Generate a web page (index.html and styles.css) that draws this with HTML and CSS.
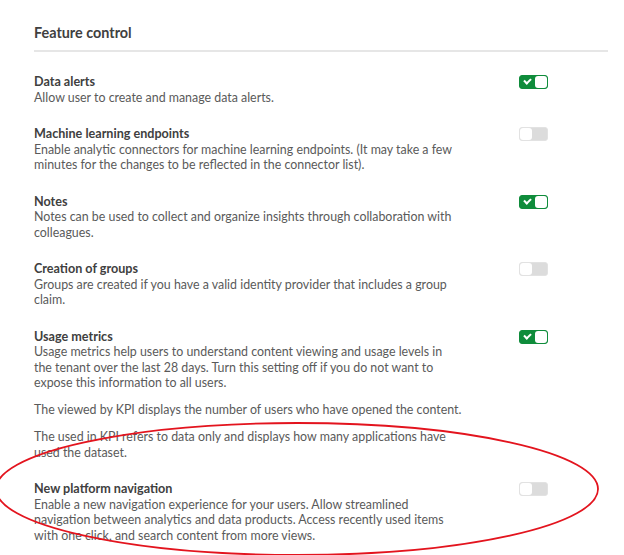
FILE: index.html
```html
<!DOCTYPE html>
<html lang="en">
<head>
    <meta charset="UTF-8">
    <meta name="viewport" content="width=device-width, initial-scale=1.0">
    <title>Feature control</title>
    <link rel="stylesheet" href="styles.css">
</head>
<body>
    <div class="panel">
        <h2 class="panel-title">Feature control</h2>

        <div class="feature-list">
            <div class="feature">
                <div class="feature-text">
                    <div class="feature-name">Data alerts</div>
                    <p>Allow user to create and manage data alerts.</p>
                </div>
                <span class="toggle on"></span>
            </div>

            <div class="feature">
                <div class="feature-text">
                    <div class="feature-name">Machine learning endpoints</div>
                    <p>Enable analytic connectors for machine learning endpoints. (It may take a few minutes for the changes to be reflected in the connector list).</p>
                </div>
                <span class="toggle"></span>
            </div>

            <div class="feature">
                <div class="feature-text">
                    <div class="feature-name">Notes</div>
                    <p>Notes can be used to collect and organize insights through collaboration with colleagues.</p>
                </div>
                <span class="toggle on"></span>
            </div>

            <div class="feature">
                <div class="feature-text">
                    <div class="feature-name">Creation of groups</div>
                    <p>Groups are created if you have a valid identity provider that includes a group claim.</p>
                </div>
                <span class="toggle"></span>
            </div>

            <div class="feature">
                <div class="feature-text">
                    <div class="feature-name">Usage metrics</div>
                    <p>Usage metrics help users to understand content viewing and usage levels in the tenant over the last 28 days. Turn this setting off if you do not want to expose this information to all users.</p>
                    <p>The viewed by KPI displays the number of users who have opened the content.</p>
                    <p>The used in KPI refers to data only and displays how many applications have used the dataset.</p>
                </div>
                <span class="toggle on"></span>
            </div>

            <div class="feature">
                <div class="feature-text">
                    <div class="feature-name">New platform navigation</div>
                    <p>Enable a new navigation experience for your users. Allow streamlined navigation between analytics and data products. Access recently used items with one click, and search content from more views.</p>
                </div>
                <span class="toggle"></span>
            </div>
        </div>
    </div>

    <svg class="annotation" width="624" height="555" viewBox="0 0 624 555">
        <ellipse cx="297" cy="489" rx="301" ry="66" fill="none" stroke="#e3141e" stroke-width="1.8"/>
    </svg>
</body>
</html>
```

FILE: styles.css
```css
* {
    margin: 0;
    padding: 0;
    box-sizing: border-box;
}

body {
    font-family: Lato, "Liberation Sans", sans-serif;
    background: #fff;
    color: #404040;
    width: 624px;
    height: 555px;
    overflow: hidden;
    position: relative;
}

.panel {
    padding: 23px 16px 0 34px;
}

.panel-title {
    font-size: 14.4px;
    font-weight: bold;
    line-height: 20px;
    color: #404040;
    padding-bottom: 7px;
    border-bottom: 2px solid #e6e6e6;
}

.feature-list {
    padding-top: 22px;
    width: 514px;
}

.feature {
    display: flex;
    justify-content: space-between;
    align-items: flex-start;
    margin-bottom: 21px;
}

.feature-text {
    width: 428px;
    font-size: 12.4px;
    line-height: 15.5px;
}

.feature-name {
    font-size: 12.6px;
    font-weight: bold;
    color: #404040;
}

.feature-text p {
    color: #5a5a5a;
}

.feature-text p + p {
    margin-top: 11.5px;
}

.toggle {
    position: relative;
    width: 29px;
    height: 14px;
    margin-top: 1px;
    border-radius: 3px;
    background: #dcdcdc;
    border: 1px solid #e2e2e2;
}

.toggle::after {
    content: "";
    position: absolute;
    top: 0;
    left: 0;
    width: 12px;
    height: 12px;
    border-radius: 3px;
    background: #fff;
}

.toggle.on {
    background: #0f8c3b;
    border-color: #0f8c3b;
}

.toggle.on::after {
    left: auto;
    right: 0;
}

.toggle.on::before {
    content: "";
    position: absolute;
    top: 2px;
    left: 4px;
    width: 5px;
    height: 3px;
    border-left: 2px solid #fff;
    border-bottom: 2px solid #fff;
    transform: rotate(-45deg);
}

.annotation {
    position: absolute;
    top: 0;
    left: 0;
    pointer-events: none;
}
```
